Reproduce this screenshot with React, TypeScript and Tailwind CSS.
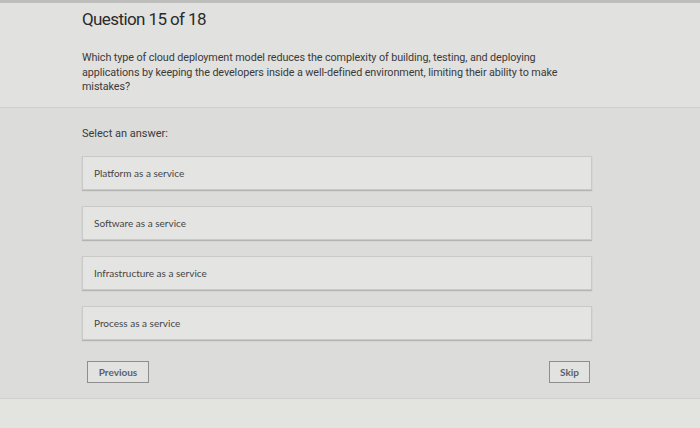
import React from "react";

const options = [
  "Platform as a service",
  "Software as a service",
  "Infrastructure as a service",
  "Process as a service",
];

export default function App() {
  return (
    <div className="w-[700px] h-[428px] overflow-hidden bg-[#d9d9d7] flex flex-col font-['Roboto',sans-serif] text-[#2f2f2f]">
      <div className="h-[3px] bg-[#bdbdbb]" />
      <div className="h-[105px] bg-[#e1e1df] border-b border-[#cfcfcd] pl-[82px] pt-[4px]">
        <h1 className="text-[17px] leading-[24px] tracking-[-0.6px] text-[#2b2b2b]">Question 15 of 18</h1>
        <p className="mt-[20px] w-[510px] text-[10.8px] leading-[14.5px] tracking-[-0.1px] text-[#3a3a3a]">
          Which type of cloud deployment model reduces the complexity of building, testing, and deploying
          applications by keeping the developers inside a well-defined environment, limiting their ability to make
          mistakes?
        </p>
      </div>
      <div className="h-[291px] bg-[#dcdcda] border-b border-[#cfcfcd] pl-[82px] pt-[19px]">
        <div className="text-[11px] leading-[14px] text-[#3a3a3a]">Select an answer:</div>
        <div className="mt-[15px] flex flex-col gap-[16px] w-[510px]">
          {options.map((o) => (
            <div
              key={o}
              className="h-[34px] bg-[#e4e4e2] border border-[#c9c9c7] shadow-[0_1px_1px_rgba(0,0,0,0.18)] flex items-center pl-[11px] font-['Lato',sans-serif] text-[10px] text-[#454545]"
            >
              {o}
            </div>
          ))}
        </div>
        <div className="mt-[21px] flex justify-between w-[508px] pl-[5px]">
          <button className="w-[62px] h-[22px] border border-[#8e8e8e] bg-[#e2e2e0] font-['Lato',sans-serif] font-bold text-[10px] text-[#566170]">
            Previous
          </button>
          <button className="w-[41px] h-[22px] border border-[#8e8e8e] bg-[#e2e2e0] font-['Lato',sans-serif] font-bold text-[10px] text-[#566170]">
            Skip
          </button>
        </div>
      </div>
      <div className="flex-1 bg-[#e3e3e0]" />
    </div>
  );
}
